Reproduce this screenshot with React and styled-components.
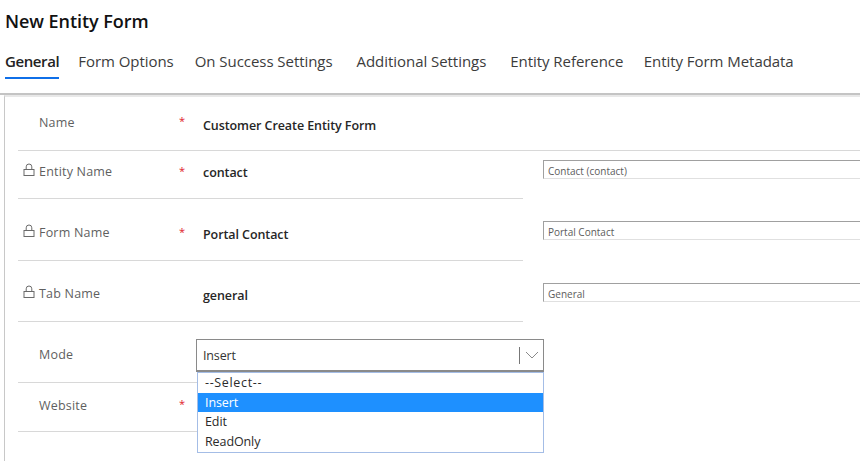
import React from "react";
import styled, { createGlobalStyle } from "styled-components";

const Global = createGlobalStyle`
  html, body { margin: 0; padding: 0; background: #fff; overflow: hidden; height: 461px; }
  body { font-family: "Open Sans", "Noto Sans", "Liberation Sans", sans-serif; }
  * { box-sizing: border-box; }
`;

const Page = styled.div`
  width: 860px;
  height: 461px;
  overflow: hidden;
  display: flex;
  flex-direction: column;
`;
const Title = styled.h1`
  margin: 0;
  height: 44px;
  padding: 9px 0 0 5px;
  font-size: 18px;
  line-height: 24px;
  font-weight: 600;
  color: #111;
  letter-spacing: -0.05px;
`;
const Tabs = styled.nav`
  display: flex;
  height: 51px;
  padding-left: 5px;
  border-bottom: 2px solid #c4c4c4;
`;
const Tab = styled.div`
  height: 35px;
  padding-top: 7px;
  margin-right: ${(p) => p.$gap}px;
  font-size: 15px;
  line-height: 20px;
  letter-spacing: ${(p) => (p.$active ? "-0.4px" : "-0.05px")};
  white-space: nowrap;
  color: ${(p) => (p.$active ? "#222" : "#3c3c3c")};
  font-weight: ${(p) => (p.$active ? 600 : 400)};
  border-bottom: ${(p) => (p.$active ? "2px solid #0f6fe8" : "none")};
`;
const Body = styled.main`
  flex: 1;
  margin: 0 0 0 4px;
  padding-left: 13px;
  border-left: 1px solid #c8c8c8;
  border-top: 2px solid #e8e8e8;
`;
const Row = styled.div`
  display: flex;
  height: ${(p) => p.$h}px;
`;
const Cell = styled.div`
  ${(p) => (p.$full ? "flex: 1;" : "flex: 0 0 505px;")}
  display: flex;
  border-bottom: 1px solid #d8d8d8;
  position: relative;
`;
const Label = styled.div`
  flex: 0 0 161px;
  display: flex;
  align-items: flex-start;
  padding-top: ${(p) => p.$top}px;
  font-size: 12.5px;
  line-height: 18px;
  letter-spacing: 0.2px;
  color: #5f5f5f;
`;
const LockSlot = styled.span`
  flex: 0 0 21px;
  height: 14px;
  padding-left: 5px;
  display: flex;
  align-items: center;
`;
const Star = styled.div`
  flex: 0 0 24px;
  padding-top: ${(p) => p.$top}px;
  font-size: 11px;
  line-height: 16px;
  color: #e0202a;
`;
const Value = styled.div`
  padding-top: ${(p) => p.$top}px;
  font-size: 12.5px;
  line-height: 18px;
  font-weight: 600;
  letter-spacing: -0.08px;
  color: #262626;
  white-space: nowrap;
`;
const Lookup = styled.div`
  flex: 1;
  height: 19px;
  margin: ${(p) => p.$top}px 0 0 20px;
  padding: 1px 0 0 4px;
  border: 1px solid #a0a0a0;
  border-right: none;
  border-bottom-color: #e0e0e0;
  font-size: 10px;
  line-height: 18px;
  color: #5c5c5c;
`;
const SelectWrap = styled.div`
  position: relative;
  flex: 0 0 348px;
  height: 33px;
  margin: 17px 0 0 -7px;
`;
const SelectBox = styled.div`
  height: 33px;
  display: flex;
  align-items: center;
  padding-left: 6px;
  border: 1px solid #8a8a8a;
  border-bottom-width: 2px;
  background: #fff;
  font-size: 12.5px;
  letter-spacing: -0.15px;
  color: #333;
`;
const Chevron = styled.span`
  margin-left: auto;
  width: 24px;
  height: 17px;
  border-left: 1px solid #777;
  display: flex;
  align-items: center;
  justify-content: center;
`;
const List = styled.ul`
  position: absolute;
  left: 1px;
  right: 0;
  top: 33px;
  margin: 0;
  padding: 0 0 1px;
  list-style: none;
  background: #fff;
  border: 1px solid #a4bde6;
  z-index: 2;
`;
const Option = styled.li`
  height: 19.5px;
  padding-left: 7px;
  font-size: 12.5px;
  line-height: 20px;
  letter-spacing: ${(p) => (p.$wide ? "0.65px" : "-0.1px")};
  color: ${(p) => (p.$selected ? "#fff" : "#2a2a2a")};
  background: ${(p) => (p.$selected ? "#1e90ff" : "transparent")};
`;

const Lock = () => (
  <svg width="12" height="14" viewBox="0 0 12 14" fill="none" stroke="#6a6a6a" strokeWidth="1">
    <rect x="1" y="6.5" width="10" height="6" />
    <path d="M3.2 6.5V3.8a2.8 2.8 0 0 1 5.6 0V6.5" />
  </svg>
);
const Down = () => (
  <svg width="14" height="8" viewBox="0 0 14 8" fill="none" stroke="#8a8a8a" strokeWidth="1">
    <path d="M1 1l6 6 6-6" />
  </svg>
);

const tabs = [
  ["General", 19, true],
  ["Form Options", 21],
  ["On Success Settings", 24],
  ["Additional Settings", 24],
  ["Entity Reference", 20.4],
  ["Entity Form Metadata", 0],
];
const fields = [
  { label: "Entity Name", value: "contact", star: true, h: 48, top: 12, vtop: 13, lookup: "Contact (contact)", ltop: 9 },
  { label: "Form Name", value: "Portal Contact", star: true, h: 62, top: 25, vtop: 27, lookup: "Portal Contact", ltop: 22 },
  { label: "Tab Name", value: "general", h: 61, top: 24, vtop: 26, lookup: "General", ltop: 22 },
];

export default function App() {
  return (
    <Page>
      <Global />
      <Title>New Entity Form</Title>
      <Tabs>
        {tabs.map(([t, gap, active]) => (
          <Tab key={t} $gap={gap} $active={active}>{t}</Tab>
        ))}
      </Tabs>
      <Body>
        <Row $h={54}>
          <Cell $full>
            <Label $top={17}><LockSlot />Name</Label>
            <Star $top={16}>*</Star>
            <Value $top={20}>Customer Create Entity Form</Value>
          </Cell>
        </Row>
        {fields.map((f) => (
          <Row key={f.label} $h={f.h}>
            <Cell>
              <Label $top={f.top}><LockSlot><Lock /></LockSlot>{f.label}</Label>
              <Star $top={f.top}>{f.star ? "*" : ""}</Star>
              <Value $top={f.vtop}>{f.value}</Value>
            </Cell>
            <Lookup $top={f.ltop}>{f.lookup}</Lookup>
          </Row>
        ))}
        <Row $h={61}>
          <Cell>
            <Label $top={24}><LockSlot />Mode</Label>
            <Star $top={24} />
            <SelectWrap>
              <SelectBox>Insert<Chevron><Down /></Chevron></SelectBox>
              <List>
                <Option $wide>--Select--</Option>
                <Option $selected>Insert</Option>
                <Option>Edit</Option>
                <Option>ReadOnly</Option>
              </List>
            </SelectWrap>
          </Cell>
        </Row>
        <Row $h={49}>
          <Cell>
            <Label $top={14}><LockSlot />Website</Label>
            <Star $top={13}>*</Star>
          </Cell>
        </Row>
      </Body>
    </Page>
  );
}
